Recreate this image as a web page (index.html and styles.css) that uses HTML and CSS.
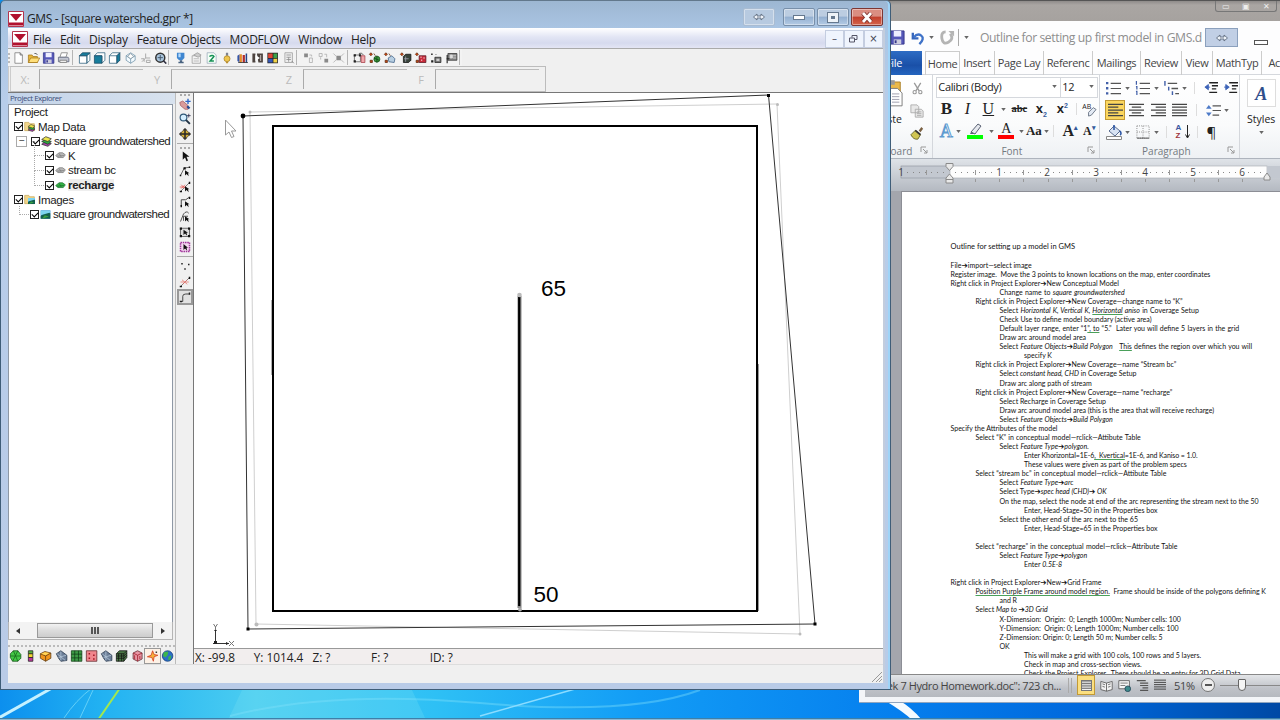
FILE: index.html
```html
<!DOCTYPE html>
<html lang="en">
<head>
  <meta charset="UTF-8">
  <title>GMS - [square watershed.gpr *]</title>
  <link rel="stylesheet" href="styles.css">
</head>
<body>
  <!-- icon sheet -->
  <svg class="sheet">
    <symbol id="logo" viewBox="0 0 16 16"><path d="M.5.5h15v15H.5z" fill="#fff" stroke="#b3344c"/><path d="M2 3h12L8 10z" fill="#b0102e"/><path d="M1 11.5h14v3H1z" fill="#b0102e"/></symbol>
    <symbol id="new" viewBox="0 0 16 16"><path d="M3 1h7l3 3v11H3z" fill="#fff" stroke="#777"/><path d="M10 1v3h3" fill="none" stroke="#555"/></symbol>
    <symbol id="open" viewBox="0 0 16 16"><path d="M1 4h5l1 2h6v8H1z" fill="#e8b73c" stroke="#a4781c"/><path d="M4 8h12l-3 6H1z" fill="#ffdf7a" stroke="#a4781c"/><path d="M9 2q3-1 4 2" fill="none" stroke="#444"/></symbol>
    <symbol id="save" viewBox="0 0 16 16"><path d="M1 1h14v14H1z" fill="#5557b8" stroke="#33358a"/><path d="M4 1h8v6H4z" fill="#eef"/><path d="M4 10h8v5H4z" fill="#ccd"/><path d="M5 11h2v3H5z" fill="#33358a"/></symbol>
    <symbol id="print" viewBox="0 0 16 16"><path d="M5 1h8l-2 6H3z" fill="#fff" stroke="#777"/><path d="M1 7h13l1 2v4H1z" fill="#c2c6d2" stroke="#596078"/><path d="M3 11h9v3H3z" fill="#eee" stroke="#777"/></symbol>
    <symbol id="cubetop" viewBox="0 0 16 16"><path d="M1 5h10v10H1zM11 5l4-4v10l-4 4z" fill="#fff" stroke="#2b5f7c"/><path d="M1 5l4-4h10l-4 4z" fill="#177d9c" stroke="#1c4a64"/></symbol>
    <symbol id="cubefront" viewBox="0 0 16 16"><path d="M1 5l4-4h10v10l-4 4V5z" fill="#fff" stroke="#2b5f7c"/><path d="M1 5h10v10H1z" fill="#177d9c" stroke="#1c4a64"/></symbol>
    <symbol id="cubeside" viewBox="0 0 16 16"><path d="M1 5l4-4h10l-4 4v10H1z" fill="#fff" stroke="#2b5f7c"/><path d="M11 5l4-4v10l-4 4z" fill="#177d9c" stroke="#1c4a64"/><path d="M1 5h10" stroke="#2b5f7c"/></symbol>
    <symbol id="oblique" viewBox="0 0 16 16"><path d="M8 1l6 4v6l-6 4-6-4V5zM2 5l6 4 6-4M8 9v6" fill="#f4fbff" stroke="#6e92a8"/><path d="M8 2l4 4-4 3-4-3z" fill="#fff" stroke="#7a8c98"/></symbol>
    <symbol id="prev" viewBox="0 0 16 16"><path d="M8 2v6h6M8 8l-5 5M2 9h4v4M9 11h5v3H9z" fill="none" stroke="#aaa" stroke-width="1.3"/></symbol>
    <symbol id="frame" viewBox="0 0 16 16"><circle cx="7.500" cy="7.500" r="6" fill="#a9c5dd" stroke="#333" stroke-width="2"/><path d="M4 7.500h7M7.500 4v7" stroke="#456" stroke-width="1.200"/><path d="M11.500 11.500l4 4" stroke="#334" stroke-width="2"/></symbol>
    <symbol id="glass" viewBox="0 0 16 16"><path d="M3 1h10v7l-3 3H6L3 8z" fill="#3f86d0"/><path d="M5 2h3v5H5z" fill="#b5dcff"/><path d="M7 11h3v2h2v2H5v-2h2z" fill="#4a6380"/></symbol>
    <symbol id="props" viewBox="0 0 16 16"><path d="M2 5h11v10H2z" fill="#f4f4f4" stroke="#999"/><path d="M4 4l5-3 5 3-4 3z" fill="#ccc" stroke="#999"/><path d="M4 9h7M4 12h7" stroke="#aaa"/></symbol>
    <symbol id="refresh" viewBox="0 0 16 16"><path d="M2 1h9l3 3v11H2z" fill="#f4fff6" stroke="#9ab"/><path d="M5 6q4-3 6 0l-5 6h5" fill="none" stroke="#169155" stroke-width="2"/></symbol>
    <symbol id="bulb" viewBox="0 0 16 16"><path d="M7 1h3v4H7z" fill="#7c8290"/><circle cx="8.500" cy="9" r="4" fill="#efc64e" stroke="#a98224"/><path d="M7 13h3v2H7z" fill="#bb9033"/></symbol>
    <symbol id="books" viewBox="0 0 16 16"><path d="M1 5l3-2v11l-3-2z" fill="#3456a8"/><path d="M4 3h3v11H4z" fill="#e58c28"/><path d="M8 4h3v10H8z" fill="#b02c2c"/><path d="M12 2h2v12h-2z" fill="#24448c"/><path d="M2 14h13" stroke="#222"/></symbol>
    <symbol id="play" viewBox="0 0 16 16"><path d="M1 2h4v12H1zM7 2h8v12H9z" fill="#4d4440"/><path d="M5 4l6 4-6 4z" fill="#fff"/><path d="M12 4v8" stroke="#e8d9d9"/></symbol>
    <symbol id="colors" viewBox="0 0 16 16"><path d="M1 1h14v14H1z" fill="#222"/><path d="M2 2h6v6H2z" fill="#de4434"/><path d="M9 2h5v6H9z" fill="#3ba048"/><path d="M2 9h6v5H2z" fill="#3558b8"/><path d="M9 9h5v5H9z" fill="#f1d347"/></symbol>
    <symbol id="calc" viewBox="0 0 16 16"><path d="M3 1h10v13H3z" fill="#eee" stroke="#999"/><path d="M5 4h6M5 7h6M5 10h6M8 7v6" stroke="#888"/><path d="M12 12l3 3" stroke="#777"/></symbol>
    <symbol id="dim1" viewBox="0 0 16 16"><path d="M2 2h5v5H2z" fill="#8a8a8a"/><path d="M9 8h4v6H9zM9 4h3v2" fill="none" stroke="#aaa"/></symbol>
    <symbol id="dim2" viewBox="0 0 16 16"><path d="M9 9h5v5H9z" fill="#8a8a8a"/><path d="M2 2h4v4H2zM9 3h3v4M4 7v3" fill="none" stroke="#aaa"/></symbol>
    <symbol id="dim3" viewBox="0 0 16 16"><path d="M5 5h6v6H5z" fill="#8a8a8a"/><path d="M1 2l4 4M15 2l-4 4M1 14l4-4M15 14l-4-4" stroke="#aaa"/></symbol>
    <symbol id="map1" viewBox="0 0 16 16"><path d="M1 4h8v9H1z" fill="none" stroke="#555"/><path d="M0 3h3v3H0zM7 3h3v3H7zM0 11h3v3H0z" fill="#222"/><path d="M10 5h5v9h-5z" fill="#f1a7ab" stroke="#a63d48"/><path d="M7 2q4-2 6 2" fill="none" stroke="#333"/></symbol>
    <symbol id="map2" viewBox="0 0 16 16"><path d="M3 1l2 2-2 2-2-2zM2 11h3v3H2zM7 2l2 3" fill="#c9440e" stroke="#5b2b12"/><circle cx="11" cy="9.500" r="4" fill="#3a9b3c" stroke="#1c521e"/><path d="M7 8l7 3M11 5v9" stroke="#124214"/></symbol>
    <symbol id="map3" viewBox="0 0 16 16"><path d="M3 1l2 2-2 2-2-2zM2 11h3v3H2zM7 2l2 3" fill="#c9440e" stroke="#5b2b12"/><path d="M6 8l5-3 4 4-1 5-7-1z" fill="#b8cfe2" stroke="#3c5f85"/></symbol>
    <symbol id="map4" viewBox="0 0 16 16"><path d="M3 1l2 2-2 2-2-2z" fill="#c9440e" stroke="#5b2b12"/><path d="M5 6l3-3h7v8l-3 3H5z" fill="#38433a" stroke="#111"/><path d="M6 9h6M8 6v7" stroke="#aab"/></symbol>
    <symbol id="map5" viewBox="0 0 16 16"><path d="M3 1l2 2-2 2-2-2zM2 11h3v3H2z" fill="#c9440e" stroke="#5b2b12"/><path d="M6 5h9v9H6z" fill="#c92a3a" stroke="#581620"/><path d="M8 7h1M12 8h1M9 11h1" stroke="#fff" stroke-width="2"/></symbol>
    <symbol id="map6" viewBox="0 0 16 16"><path d="M2 2h2v2H2zM2 11h3v3H2zM7 3h2v1" fill="#222"/><path d="M7 7h8v7H7z" fill="#777" stroke="#222"/><path d="M9 9h4v3H9z" fill="#ccc"/></symbol>
    <symbol id="map7" viewBox="0 0 16 16"><path d="M3 2h12v9H3z" fill="#888" stroke="#333"/><path d="M6 4h3v4H6zM10 5h4M10 8h4" fill="#ddd" stroke="#ddd"/><path d="M2 4v11M1 9h4" stroke="#222" stroke-width="1.500"/></symbol>
    <symbol id="pan" viewBox="0 0 16 16"><path d="M1 6l4-2 7 6v5H8L2 10z" fill="#d99b9b" stroke="#a35c62"/><path d="M12 1v7M8.500 4.500h7" stroke="#2c64c6" stroke-width="1.800"/><path d="M11 11l3 3" stroke="#234a91" stroke-width="3"/></symbol>
    <symbol id="zoomi" viewBox="0 0 16 16"><circle cx="6" cy="6" r="4.500" fill="#d5efff" stroke="#2f5878" stroke-width="1.500"/><path d="M9.500 9.500l5 5" stroke="#234" stroke-width="2.500"/><path d="M13 1v5M10.500 3.500h5" stroke="#224"/></symbol>
    <symbol id="rotate" viewBox="0 0 16 16"><path d="M8 1l7 7-7 7-7-7z" fill="#d5b03a" stroke="#4b3d16"/><path d="M8 2v12M2 8h12" stroke="#272727" stroke-width="2"/><path d="M5 3l3-3 3 3zM5 13l3 3 3-3zM3 5L0 8l3 3zM13 5l3 3-3 3z" fill="#333"/></symbol>
    <symbol id="arrow" viewBox="0 0 16 16"><path d="M5 2v11l3-3 2 5 2-1-2-5h4z" fill="#111"/></symbol>
    <symbol id="selpt" viewBox="0 0 16 16"><path d="M2 14L7 4l7-1" fill="none" stroke="#666" stroke-width="1.300"/><path d="M1 13h2v2H1zM6 3h3v3H6zM13 2h2v2h-2z" fill="#111"/><path d="M8 7v7l2-2 3 3-1-4h2z" fill="#111"/></symbol>
    <symbol id="selvx" viewBox="0 0 16 16"><path d="M2 14L14 2" stroke="#555"/><path d="M3 5l5 5M8 5l-5 5M1 8h8" stroke="#e5504b"/><path d="M1 13h3v2H1zM13 1h2v3h-2zM8 7v7l2-2 3 3-1-4h2z" fill="#111"/></symbol>
    <symbol id="selarc" viewBox="0 0 16 16"><path d="M3 13V5h6l4-3" fill="none" stroke="#444" stroke-width="1.300"/><path d="M2 12h2v3H2zM13 1h2v3h-2zM8 7v7l2-2 3 3-1-4h2z" fill="#111"/></symbol>
    <symbol id="selgrp" viewBox="0 0 16 16"><path d="M2 14L6 4q4-5 7-1M6 13V7h6" fill="none" stroke="#444" stroke-width="1.200"/><path d="M8 7v7l2-2 3 3-1-4h2z" fill="#111"/></symbol>
    <symbol id="selpoly" viewBox="0 0 16 16"><path d="M2 3h12v11H2z" fill="#ddd" stroke="#444"/><path d="M1 2h3v3H1zM12 2h3v3h-3zM1 12h3v3H1zM12 12h3v3h-3zM6 5v7l2-2 3 3-1-4h2z" fill="#111"/></symbol>
    <symbol id="selbox" viewBox="0 0 16 16"><path d="M2 2h12v12H2z" fill="#f4d6f0" stroke="#a0359a" stroke-dasharray="2 1" stroke-width="2"/><path d="M6 4v8l2-2 3 3-1-4h2z" fill="#111"/></symbol>
    <symbol id="mkpt" viewBox="0 0 16 16"><path d="M3 4h2v2H3zM12 5h2v2h-2zM7 11h2v2H7z" fill="#222"/></symbol>
    <symbol id="mkvx" viewBox="0 0 16 16"><path d="M2 14L14 2" stroke="#555"/><path d="M4 5l7 6M2 8h11M5 11l6-6" stroke="#e5736b"/><path d="M1 13h3v2H1zM13 1h2v3h-2z" fill="#111"/></symbol>
    <symbol id="mkarc" viewBox="0 0 16 16"><path d="M3 14h2V7q0-3 4-3h5" fill="none" stroke="#444" stroke-width="1.300"/><path d="M1 13h3v2H1zM13 2h2v3h-2z" fill="#222"/></symbol>
    <symbol id="folder" viewBox="0 0 16 16"><path d="M1 2h6l1 2h7v10H1z" fill="#f2d68a" stroke="#c5a351"/></symbol>
    <symbol id="layers" viewBox="0 0 16 16"><path d="M1 12l6-4 8 3-5 4z" fill="#aa48ae" stroke="#222"/><path d="M1 8l6-3 8 3-5 4z" fill="#2fae43" stroke="#222"/><path d="M1 5l6-4 8 3-5 4z" fill="#ede44c" stroke="#222"/></symbol>
    <symbol id="cov" viewBox="0 0 16 16"><path d="M1 8l5-4h5l4 3-3 4H4z" fill="#b8b8b8" stroke="#707070"/><path d="M3 9l10-1M6 5l3 5" stroke="#777"/></symbol>
    <symbol id="covon" viewBox="0 0 16 16"><path d="M1 8l5-4h5l4 3-3 4H4z" fill="#35b446" stroke="#19692a"/><path d="M3 9l10-1M6 5l3 5" stroke="#19692a"/></symbol>
    <symbol id="pic" viewBox="0 0 16 16"><path d="M1 2h14v12H1z" fill="#2979c8"/><path d="M1 10l6-5 8 1v8H1z" fill="#12604f"/><path d="M1 2h14v3L1 9z" fill="#7dd4f1"/><path d="M3 14l4-5 6 2z" fill="#3aa042"/></symbol>
    <symbol id="tin" viewBox="0 0 16 16"><path d="M5 1h6l4 5v5l-4 4H4l-3-5V5z" fill="#43c746" stroke="#17521a"/><path d="M1 8h14M5 1l6 14M11 1L4 15" stroke="#17661a"/></symbol>
    <symbol id="bore" viewBox="0 0 16 16"><path d="M5 1h6v4H5z" fill="#55b03f" stroke="#222"/><path d="M5 5h6v5H5z" fill="#f2d632" stroke="#222"/><path d="M5 10h6v5H5z" fill="#bd369c" stroke="#222"/></symbol>
    <symbol id="solid" viewBox="0 0 16 16"><path d="M1 5l6-3 8 2v7l-7 4-7-4z" fill="#f0951e" stroke="#5c3a12"/><path d="M1 5l7 3 7-4M8 8v7" fill="none" stroke="#5c3a12"/><path d="M2 5l5-2 6 1-5 3z" fill="#ffd75b"/></symbol>
    <symbol id="mesh" viewBox="0 0 16 16"><path d="M1 5l6-4 8 6v7l-8 1-3-4z" fill="#6d7f98" stroke="#263549"/><path d="M2 5l11 9M7 2v12M4 10l10-3" stroke="#b8cbdc"/></symbol>
    <symbol id="grid2" viewBox="0 0 16 16"><path d="M1 1h14v14H1z" fill="#3d9b46" stroke="#113d17"/><path d="M5.500 1v14M10.500 1v14M1 5.500h14M1 10.500h14" stroke="#113d17"/></symbol>
    <symbol id="scatter" viewBox="0 0 16 16"><path d="M1 1h14v14H1z" fill="#f0858c" stroke="#5d2328"/><path d="M4 4h2v2H4zM10 6h2v2h-2zM4 10h2v2H4zM10 11h2v2h-2z" fill="#9e1422"/></symbol>
    <symbol id="grid3" viewBox="0 0 16 16"><path d="M1 5l4-4h10v9l-4 5H1z" fill="#4a7745" stroke="#111"/><path d="M1 5h10l4-4M11 5v10M4 5v10M8 5v10M1 8h10l4-4M1 11h10l4-4" fill="none" stroke="#111"/></symbol>
    <symbol id="scat3" viewBox="0 0 16 16"><path d="M2 4l6-3 6 3v8l-6 3-6-3z" fill="#e896a4" stroke="#5d2328"/><path d="M2 4l6 3 6-3M8 7v8M4 7v5M11 8v4" fill="none" stroke="#9e1422"/></symbol>
    <symbol id="mapmod" viewBox="0 0 16 16"><path d="M8 1l2 5 5 1-5 2-1 6-2-5-6-1 5-2z" fill="#f5b13a" stroke="#d2341d"/><path d="M12 2h2v2h-2z" fill="#333"/></symbol>
    <symbol id="globe" viewBox="0 0 16 16"><circle cx="8" cy="8" r="7" fill="#2c6fc9" stroke="#123a77"/><path d="M3 3l6-1-1 5-3 3-3-2zM9 9l4-2-1 5-3 2z" fill="#3db64c"/></symbol>
    <!-- word processor icons -->
    <symbol id="undo" viewBox="0 0 16 16"><path d="M3 3v6h6" fill="none" stroke="#3566bd" stroke-width="2.500"/><path d="M4 8q4-5 8-2t-2 9" fill="none" stroke="#3f72c8" stroke-width="2.500"/></symbol>
    <symbol id="redo" viewBox="0 0 16 16"><path d="M11 4q4 6-2 9t-7-4 4-7" fill="none" stroke="#b4b4b4" stroke-width="3"/><path d="M9 1h6v6z" fill="#b4b4b4"/></symbol>
    <symbol id="cut" viewBox="0 0 16 16"><path d="M4 1l6 10M12 1L6 11" stroke="#9a9a9a" stroke-width="1.600"/><circle cx="4.500" cy="12.500" r="2" fill="none" stroke="#9a9a9a" stroke-width="1.400"/><circle cx="11.500" cy="12.500" r="2" fill="none" stroke="#9a9a9a" stroke-width="1.400"/></symbol>
    <symbol id="copy" viewBox="0 0 16 16"><path d="M1 1h7l2 2v7H1zM6 6h7l2 2v7H6z" fill="#e8e8e8" stroke="#aaa"/><path d="M8 9h5M8 11h5M8 13h5" stroke="#aaa"/></symbol>
    <symbol id="brush" viewBox="0 0 16 16"><path d="M10 5l3-4 2 2-3 4z" fill="#7a6042"/><path d="M6 5l6 5-3 5q-5 1-8-5z" fill="#cfc553" stroke="#66652b"/><path d="M6 5l6 5" stroke="#333" stroke-width="2"/></symbol>
    <symbol id="clip" viewBox="0 0 24 30"><path d="M1 3h20v24H1z" fill="#eab94b" stroke="#a77c22"/><path d="M6 1h9v5H6z" fill="#999"/><path d="M9 10h9l5 5v14H9z" fill="#fff" stroke="#777"/><path d="M12 16h8M12 19h8M12 22h8M12 25h8" stroke="#99a"/></symbol>
    <symbol id="eraser" viewBox="0 0 16 16"><path d="M7 11l5-5 3 2-5 6-3 1z" fill="#e4ebf5" stroke="#6b7585"/></symbol>
    <symbol id="pen" viewBox="0 0 16 16"><path d="M4 9l7-8 3 2-6 8z" fill="#e6e9ef" stroke="#596173"/><path d="M4 9l4 2-5 0z" fill="#596173"/><path d="M0 12h16v4H0z" fill="#0f0"/></symbol>
    <symbol id="bul" viewBox="0 0 16 16"><path d="M5 2.500h11M5 8h11M5 13.500h11" stroke="#555" stroke-width="1.200"/><path d="M0 1h2.500v2.500H0zM0 6.500h2.500V9H0zM0 12h2.500v2.500H0z" fill="#415fa8"/></symbol>
    <symbol id="num" viewBox="0 0 16 16"><path d="M5 2.500h11M5 8h11M5 13.500h11" stroke="#555" stroke-width="1.200"/><path d="M1.500 0v4M1 6h1v3M1 11h1v4" fill="none" stroke="#415fa8" stroke-width="1.300"/></symbol>
    <symbol id="multi" viewBox="0 0 16 16"><path d="M4 2.500h10M8 8h7M12 13.500h4" stroke="#555" stroke-width="1.500"/><path d="M1 0v5M5 6v4M9 11v4" stroke="#415fa8" stroke-width="1.500"/></symbol>
    <symbol id="outd" viewBox="0 0 16 16"><path d="M6 2h10M9 5.500h7M9 9h5M6 13h9" stroke="#222" stroke-width="1.700"/><path d="M7 7H3M5 4L1 7l4 3z" fill="#3d63b8" stroke="#3d63b8"/></symbol>
    <symbol id="ind" viewBox="0 0 16 16"><path d="M6 2h10M9 5.500h7M9 9h5M6 13h9" stroke="#222" stroke-width="1.700"/><path d="M0 7h4M2 4l4 3-4 3z" fill="#3d63b8" stroke="#3d63b8"/></symbol>
    <symbol id="al" viewBox="0 0 16 16"><path d="M0 1.500h16M0 4.500h11M0 7.500h16M0 10.500h11M0 13.500h16" stroke="#444" stroke-width="1.300"/></symbol>
    <symbol id="ac" viewBox="0 0 16 16"><path d="M0 1.500h16M3 4.500h10M0 7.500h16M3 10.500h10M0 13.500h16" stroke="#444" stroke-width="1.300"/></symbol>
    <symbol id="ar" viewBox="0 0 16 16"><path d="M0 1.500h16M5 4.500h11M0 7.500h16M5 10.500h11M0 13.500h16" stroke="#444" stroke-width="1.300"/></symbol>
    <symbol id="aj" viewBox="0 0 16 16"><path d="M0 1.500h16M0 4.500h16M0 7.500h16M0 10.500h16M0 13.500h16" stroke="#444" stroke-width="1.300"/></symbol>
    <symbol id="lsp" viewBox="0 0 16 16"><path d="M7 3h9M7 8h9M7 13h7" stroke="#555" stroke-width="1.300"/><path d="M0 6l3-4 3 4zM0 10l3 4 3-4z" fill="#4c7ac8"/></symbol>
    <symbol id="bucket" viewBox="0 0 16 16"><path d="M3 7l5-5 6 5-5 5z" fill="#d8e3f3" stroke="#5a6d90"/><path d="M8 1v5M14 7q2 3 0 4" fill="none" stroke="#2e57a5" stroke-width="1.600"/><path d="M.5 12.500h15v3H.5z" fill="#fff" stroke="#888"/></symbol>
    <symbol id="bord" viewBox="0 0 16 16"><path d="M1 1h14v14H1zM8 1v14M1 8h14" fill="none" stroke="#777" stroke-dasharray="1 1.500"/><path d="M1 15h14" stroke="#444"/></symbol>
    <symbol id="sort" viewBox="0 0 5 14"><path d="M2.500 0v12M.5 9.500l2 3.500 2-3.500" fill="none" stroke="#222"/></symbol>
    <symbol id="launch" viewBox="0 0 8 8"><path d="M1 6V1h5M3 3l4 4M7 4v3H4" fill="none" stroke="#999"/></symbol>
    <symbol id="dd" viewBox="0 0 6 4"><path d="M0 0h6L3 4z" fill="#666"/></symbol>
    <symbol id="read" viewBox="0 0 16 16"><path d="M1 3l7 2 7-2v10l-7 2-7-2zM8 5v10M3 6l3 1M3 9l3 1M10 7l3-1M10 10l3-1" fill="#f3f3f3" stroke="#555"/></symbol>
    <symbol id="web" viewBox="0 0 16 16"><path d="M1 2h13v10H1z" fill="#f6f6f6" stroke="#555"/><path d="M3 5h9M3 8h6" stroke="#666"/><circle cx="12" cy="12" r="3.500" fill="#3d8a8c" stroke="#245"/></symbol>
    <symbol id="outl" viewBox="0 0 16 16"><path d="M1 2h11M5 5h10M5 8h10M8 11h7M5 14h10" stroke="#555" stroke-width="1.500"/></symbol>
    <symbol id="ptr" viewBox="0 0 16 16"><path d="M2.500 6l3.500-3v2h4V3l3.500 3-3.500 3V7H6v2z" fill="#eef3f9" stroke="#5d6b7d" stroke-width=".9"/></symbol>
  </svg>

  <svg class="wallpaper" width="1280" height="40" viewBox="0 680 1280 40">
    <defs>
      <linearGradient id="sky"><stop offset="0" stop-color="#0c8fee"/><stop offset=".08" stop-color="#22b2f2"/><stop offset=".2" stop-color="#4bcdf1"/><stop offset=".34" stop-color="#2ec0f5"/><stop offset=".5" stop-color="#129cf6"/><stop offset=".7" stop-color="#057fee"/><stop offset=".85" stop-color="#0068dc"/><stop offset="1" stop-color="#0049a5"/></linearGradient>
    </defs>
    <rect y="680" width="1280" height="40" fill="url(#sky)"/>
    <path d="M242 690h170l14 30H228z" fill="#8ee9f5" opacity=".2"/>
    <path d="M-5 720L52 688" stroke="#c5f1ff" stroke-width="3"/>
    <path d="M64 718Q76 700 92 688M80 718L94 688" fill="none" stroke="#64d0f8"/>
    <path d="M98 720L120 688" stroke="#a4e84c" stroke-width="2"/>
    <path d="M230 716Q330 690 480 703T700 690" fill="none" stroke="#83e0fb" stroke-width="2" opacity=".4"/>
    <path d="M480 716L575 689" stroke="#8bdcff" stroke-width="1.500"/>
    <path d="M884 700q20 12 28 20h10q-12-14-24-20z" fill="#f4fbff"/>
    <path d="M0 718.500h1280" stroke="#3e7fa8"/>
    <path d="M0 719.500h1280" stroke="#8cb9d6"/>
  </svg>

  <div class="word">
    <div class="backbar">
      <div class="backbtns"><i>▭</i><i>▣</i><i>✕</i></div>
    </div>
    <div class="wtitle">
      <svg class="i15"><use href="#save"/></svg>
      <svg class="i15"><use href="#undo"/></svg>
      <svg class="dd"><use href="#dd"/></svg>
      <svg class="i15"><use href="#redo"/></svg>
      <span class="qsep"></span>
      <svg class="dd"><use href="#dd"/></svg>
      <span class="wname">Outline for setting up first model in GMS.d</span>
      <span class="wsize"><svg class="i16"><use href="#ptr"/></svg></span>
      <span class="wmin"></span>
    </div>
    <div class="tabs">
      <b class="file">File</b><b class="on">Home</b><b>Insert</b><b>Page Lay</b><b>Referenc</b><b>Mailings</b><b>Review</b><b>View</b><b>MathTyp</b><b class="last">Ac</b>
    </div>
    <div class="ribbon">
      <div class="group clipboard">
        <div class="cliprow">
          <div class="paste"><svg width="22" height="30"><use href="#clip"/></svg><span>Paste</span></div>
          <div class="clipcol">
            <svg class="i13"><use href="#cut"/></svg>
            <svg class="i14"><use href="#copy"/></svg>
            <svg class="i14"><use href="#brush"/></svg>
          </div>
        </div>
        <div class="gname"><span>Clipboard</span><svg class="launch"><use href="#launch"/></svg></div>
      </div>
      <div class="group font">
        <div class="combos">
          <div class="combo face">Calibri (Body)<svg class="dd"><use href="#dd"/></svg></div>
          <div class="combo size">12<svg class="dd"><use href="#dd"/></svg></div>
        </div>
        <div class="frow f2">
          <span class="ser bd">B</span><span class="ser it">I</span><span class="ser un">U</span><svg class="dd"><use href="#dd"/></svg>
          <span class="ser st">abc</span><span class="xx">x<sub>2</sub></span><span class="xx">x<sup>2</sup></span><i class="vs"></i>
          <span class="clear">AB<svg class="i15"><use href="#eraser"/></svg></span>
        </div>
        <div class="frow f3">
          <span class="ser glow">A</span><svg class="dd"><use href="#dd"/></svg><svg class="i16"><use href="#pen"/></svg><svg class="dd"><use href="#dd"/></svg>
          <span class="ser redu">A</span><svg class="dd"><use href="#dd"/></svg><span class="ser aa">Aa</span><svg class="dd"><use href="#dd"/></svg><i class="vs"></i>
          <span class="ser grow">A<sup>▴</sup></span><span class="ser shrink">A<sup>▾</sup></span>
        </div>
        <div class="gname"><span>Font</span><svg class="launch"><use href="#launch"/></svg></div>
      </div>
      <div class="group para">
        <div class="frow p1">
          <svg class="i15"><use href="#bul"/></svg><svg class="dd"><use href="#dd"/></svg><svg class="i15"><use href="#num"/></svg><svg class="dd"><use href="#dd"/></svg><svg class="i15"><use href="#multi"/></svg><svg class="dd"><use href="#dd"/></svg><i class="vs"></i><svg class="i14"><use href="#outd"/></svg><svg class="i14"><use href="#ind"/></svg>
        </div>
        <div class="frow p2">
          <span class="pressed"><svg class="i15"><use href="#al"/></svg></span><svg class="i15"><use href="#ac"/></svg><svg class="i15"><use href="#ar"/></svg><svg class="i15"><use href="#aj"/></svg><i class="vs"></i><svg class="i15"><use href="#lsp"/></svg><svg class="dd"><use href="#dd"/></svg>
        </div>
        <div class="frow p3">
          <svg class="i16"><use href="#bucket"/></svg><svg class="dd"><use href="#dd"/></svg><svg class="i14"><use href="#bord"/></svg><svg class="dd"><use href="#dd"/></svg><i class="vs"></i><span class="az"><em>A</em><em>Z</em></span><svg width="5" height="14"><use href="#sort"/></svg><i class="vs"></i><span class="pil">¶</span>
        </div>
        <div class="gname"><span>Paragraph</span><svg class="launch"><use href="#launch"/></svg></div>
      </div>
      <div class="group styles">
        <div class="sbox">A</div>
        <span>Styles</span>
        <svg class="dd"><use href="#dd"/></svg>
      </div>
    </div>
    <svg class="ruler" width="421" height="32" viewBox="859 159 421 32">
      <rect x="901" y="166" width="50" height="12" fill="#c3c8d0" stroke="#8b9099" stroke-width=".6"/>
      <rect x="950" y="166" width="317" height="12" fill="#fdfdfd" stroke="#a5a9b0" stroke-width=".6"/>
      <rect x="1267" y="166" width="20" height="12" fill="#c3c8d0"/>
      <path d="M907 172.500h40M955 172.500h38M1004 172.500h38M1053 172.500h38M1102 172.500h37M1150 172.500h38M1199 172.500h37M1248 172.500h18" stroke="#888" stroke-dasharray="1 5"/>
      <path d="M926.500 170v5M975.500 170v5M1023.500 170v5M1072.500 170v5M1121.500 170v5M1169.500 170v5M1218.500 170v5" stroke="#999"/>
      <path d="M975.500 179v3M999.500 179v3M1023.500 179v3M1048.500 179v3M1072.500 179v3M1096.500 179v3M1121.500 179v3M1145.500 179v3M1169.500 179v3M1194.500 179v3M1218.500 179v3M1242.500 179v3" stroke="#999"/>
      <path d="M946 163.500h7v3l-3.500 4-3.500-4zM946 178l3.500-4 3.500 4v5h-7zM946 179.500h7M1264 177l3-4 3 4v3h-6z" fill="#e9e9e9" stroke="#8a8a8a"/>
      <g class="rn"><text x="901" y="176">1</text><text x="999" y="176">1</text><text x="1047" y="176">2</text><text x="1096" y="176">3</text><text x="1145" y="176">4</text><text x="1193" y="176">5</text><text x="1242" y="176">6</text></g>
    </svg>
    <div class="docarea">
      <div class="page">
        <p class="head">Outline for setting up a model in GMS</p>
        <p>File<s>➔</s>import—select image</p>
        <p>Register image.&nbsp; Move the 3 points to known locations on the map, enter coordinates</p>
        <p>Right click in Project Explorer<s>➔</s>New Conceptual Model</p>
        <p class="l2 wide">Change name to <em>square groundwatershed</em></p>
        <p class="l1">Right click in Project Explorer<s>➔</s>New Coverage—change name to “K”</p>
        <p class="l2 wide">Select <em>Horizontal K, Vertical K, <u>Horizontal</u> aniso</em> in Coverage Setup</p>
        <p class="l2">Check Use to define model boundary (active area)</p>
        <p class="l2 wide">Default layer range, enter “1<u>”, to</u> “5.”&nbsp; Later you will define 5 layers in the grid</p>
        <p class="l2">Draw arc around model area</p>
        <p class="l2 wide">Select <em>Feature Objects<s>➔</s>Build Polygon</em> &nbsp; <u>This</u> defines the region over which you will</p>
        <p class="l3">specify K</p>
        <p class="l1">Right click in Project Explorer<s>➔</s>New Coverage—name “Stream bc”</p>
        <p class="l2">Select <em>constant head, CHD</em> in Coverage Setup</p>
        <p class="l2">Draw arc along path of stream</p>
        <p class="l1">Right click in Project Explorer<s>➔</s>New Coverage—name “recharge”</p>
        <p class="l2">Select Recharge in Coverage Setup</p>
        <p class="l2">Draw arc around model area (this is the area that will receive recharge)</p>
        <p class="l2 wide">Select <em>Feature Objects<s>➔</s>Build Polygon</em></p>
        <p>Specify the Attributes of the model</p>
        <p class="l1 wide">Select “K” in conceptual model—rclick—Attibute Table</p>
        <p class="l2 wide">Select <em>Feature Type<s>➔</s>polygon.</em></p>
        <p class="l3 tight">Enter Khorizontal=1E-6<u>,&nbsp; Kvertical</u>=1E-6, and Kaniso = 1.0.</p>
        <p class="l3">These values were given as part of the problem specs</p>
        <p class="l1 wide">Select “stream bc” in conceptual model—rclick—Attibute Table</p>
        <p class="l2 wide">Select <em>Feature Type<s>➔</s>arc</em></p>
        <p class="l2">Select Type<s>➔</s><em>spec head (CHD)<s>➔</s> OK</em></p>
        <p class="l2">On the map, select the node at end of the arc representing the stream next to the 50</p>
        <p class="l3">Enter, Head-Stage=50 in the Properties box</p>
        <p class="l2">Select the other end of the arc next to the 65</p>
        <p class="l3">Enter, Head-Stage=65 in the Properties box</p>
        <p>&nbsp;</p>
        <p class="l1 wide">Select “recharge” in the conceptual model—rclick—Attribute Table</p>
        <p class="l2 wide">Select <em>Feature Type<s>➔</s>polygon</em></p>
        <p class="l3">Enter <em>0.5E-8</em></p>
        <p>&nbsp;</p>
        <p>Right click in Project Explorer<s>➔</s>New<s>➔</s>Grid Frame</p>
        <p class="l1"><u>Position Purple Frame around model region.</u>&nbsp; Frame should be inside of the polygons defining K</p>
        <p class="l2">and R</p>
        <p class="l1">Select <em>Map to <s>➔</s>3D Grid</em></p>
        <p class="l2">X-Dimension:&nbsp; Origin:&nbsp; 0; Length 1000m; Number cells: 100</p>
        <p class="l2">Y-Dimension:&nbsp; Origin: 0; Length 1000m; Number cells: 100</p>
        <p class="l2">Z-Dimension: Origin: 0; Length 50 m; Number cells: 5</p>
        <p class="l2">OK</p>
        <p class="l3">This will make a grid with 100 cols, 100 rows and 5 layers.</p>
        <p class="l3">Check in map and cross-section views.</p>
        <p class="l3">Check the Project Explorer.&nbsp; There should be an entry for 3D Grid Data</p>
      </div>
    </div>
    <div class="wstatus">
      <span class="msg">Week 7 Hydro Homework.doc": 723 ch...</span>
      <span class="grip2"></span>
      <span class="vbtn"><svg class="i14"><use href="#aj"/></svg></span>
      <svg class="i13"><use href="#read"/></svg>
      <svg class="i13"><use href="#web"/></svg>
      <svg class="i13"><use href="#outl"/></svg>
      <svg class="i12"><use href="#aj"/></svg>
      <span class="pct">51%</span>
      <span class="minus"></span>
      <span class="track"><span class="thumb"></span></span>
    </div>
  </div>

  <div class="gms">
    <div class="title">
      <svg class="i16"><use href="#logo"/></svg>
      <span>GMS - [square watershed.gpr *]</span>
      <div class="cap">
        <b class="rs"><svg class="i16"><use href="#ptr"/></svg></b>
        <b class="mn"><i></i></b>
        <b class="mx"><i></i></b>
        <b class="cl"><svg width="12" height="11" viewBox="0 0 12 11"><path d="M2 1l8 9M10 1L2 10" stroke="#7c2f2a" stroke-width="4.500"/><path d="M2 1l8 9M10 1L2 10" stroke="#fff" stroke-width="2.800"/></svg></b>
      </div>
    </div>
    <div class="inner">
      <div class="menu">
        <svg class="i16"><use href="#logo"/></svg>
        <span>File</span><span>Edit</span><span>Display</span><span>Feature Objects</span><span>MODFLOW</span><span>Window</span><span>Help</span>
        <div class="mdi"><b>–</b><b class="rest"><svg width="9" height="8" viewBox="0 0 9 8"><path d="M3 2.500V.5h5v4H6M.5 3h5v4h-5z" fill="none" stroke="#556"/></svg></b><b>×</b></div>
      </div>
      <div class="tools">
        <i class="grip"></i>
        <svg><use href="#new"/></svg><svg><use href="#open"/></svg><svg><use href="#save"/></svg><svg><use href="#print"/></svg>
        <i class="sep"></i>
        <svg><use href="#cubetop"/></svg><svg><use href="#cubefront"/></svg><svg><use href="#cubeside"/></svg><svg><use href="#oblique"/></svg><svg><use href="#prev"/></svg><svg><use href="#frame"/></svg>
        <i class="sep"></i>
        <svg><use href="#glass"/></svg><svg><use href="#props"/></svg><svg><use href="#refresh"/></svg><svg><use href="#bulb"/></svg><svg><use href="#books"/></svg><svg><use href="#play"/></svg><svg><use href="#colors"/></svg><svg><use href="#calc"/></svg>
        <i class="sep"></i>
        <svg><use href="#dim1"/></svg><svg><use href="#dim2"/></svg><svg><use href="#dim3"/></svg>
        <i class="sep"></i>
        <svg><use href="#map1"/></svg><svg><use href="#map2"/></svg><svg><use href="#map3"/></svg><svg><use href="#map4"/></svg><svg><use href="#map5"/></svg><svg><use href="#map6"/></svg><svg><use href="#map7"/></svg>
        <i class="sep"></i>
      </div>
      <div class="coords">
        <label>X:</label><i></i><label>Y</label><i></i><label>Z</label><i></i><label>F</label><i></i>
      </div>
      <div class="main">
        <div class="side">
          <div class="pe">Project Explorer</div>
          <div class="tree">
            <div class="row">Project</div>
            <div class="row t0"><i class="ck"></i><svg><use href="#folder"/></svg><svg class="over"><use href="#layers"/></svg>Map Data</div>
            <div class="row t1 ex"><i class="ck"></i><svg><use href="#layers"/></svg>square groundwatershed</div>
            <div class="row t2"><i class="ck"></i><svg><use href="#cov"/></svg>K</div>
            <div class="row t2"><i class="ck"></i><svg><use href="#cov"/></svg>stream bc</div>
            <div class="row t2"><i class="ck"></i><svg><use href="#covon"/></svg><b>recharge</b></div>
            <div class="row t0"><i class="ck"></i><svg><use href="#folder"/></svg><svg class="over"><use href="#pic"/></svg>Images</div>
            <div class="row t1"><i class="ck"></i><svg><use href="#pic"/></svg>square groundwatershed</div>
          </div>
          <div class="hscroll"><i class="lt"></i><span class="hthumb"><i></i><i></i><i></i></span><i class="rt"></i></div>
          <div class="modules">
            <svg><use href="#tin"/></svg><svg><use href="#bore"/></svg><svg><use href="#solid"/></svg><svg><use href="#mesh"/></svg><svg><use href="#grid2"/></svg><svg><use href="#scatter"/></svg><svg><use href="#mesh"/></svg><svg><use href="#grid3"/></svg><svg><use href="#scat3"/></svg><svg class="down"><use href="#mapmod"/></svg><svg><use href="#globe"/></svg>
          </div>
        </div>
        <div class="vtools">
          <i class="vgrip"></i>
          <svg><use href="#pan"/></svg><svg><use href="#zoomi"/></svg><svg><use href="#rotate"/></svg>
          <i class="hs"></i><i class="vgrip"></i>
          <svg><use href="#arrow"/></svg><svg><use href="#selpt"/></svg><svg><use href="#selvx"/></svg><svg><use href="#selarc"/></svg><svg><use href="#selgrp"/></svg><svg><use href="#selpoly"/></svg><svg><use href="#selbox"/></svg>
          <i class="hs"></i>
          <svg><use href="#mkpt"/></svg><svg><use href="#mkvx"/></svg><svg class="down"><use href="#mkarc"/></svg>
        </div>
        <div class="view">
          <svg class="canvas" width="689" height="555" viewBox="194 93 689 555">
            <path d="M250 112L777 104L800 634L256 624z" fill="none" stroke="#cfcfcf"/>
            <path d="M243 116L768.500 95L815 624L248 629z" fill="none" stroke="#333"/>
            <path d="M273 126H757V611H273z" fill="none" stroke="#000" stroke-width="2"/>
            <path d="M272.700 300v75M757.400 364v247" stroke="#000" stroke-width="2"/>
            <path d="M519.500 296v312" stroke="#888" stroke-width="4"/>
            <path d="M519.200 297v309" stroke="#000" stroke-width="2.200"/>
            <circle cx="519.500" cy="295" r="2.300" fill="#bbb"/><circle cx="520" cy="609.500" r="2" fill="#aaa"/>
            <circle cx="243" cy="116" r="2.400"/><path d="M767 94h3v3h-3zM813.500 622.500h3v3h-3zM246.500 627.500h3v3h-3z"/>
            <g fill="#bbb"><circle cx="250" cy="112" r="1.500"/><circle cx="777.500" cy="104.500" r="1.500"/><circle cx="256.500" cy="624.500" r="2"/><circle cx="800" cy="634" r="1.500"/></g>
            <g class="big"><text x="541" y="295.500">65</text><text x="533.500" y="601.500">50</text></g>
            <path d="M215.500 631v12M213 643.500h16" stroke="#333" fill="none"/>
            <path d="M214 641h3v3h-3zM214 631h3l-1.500-2zM226 642v3l3-1.500zM213 640h4" fill="#222"/>
            <path d="M213.500 624l2 3 2-3M215.500 627v3M229 641l5 5M234 641l-5 5" stroke="#777" fill="none"/>
            <path d="M225.500 120v15l3.500-3 2.500 5.500 2.500-1-2.500-5.500h4.500z" fill="#fff" stroke="#999"/>
          </svg>
          <div class="status"><span>X: -99.8</span><span>Y: 1014.4</span><span>Z: ?</span><span>F: ?</span><span>ID: ?</span></div>
        </div>
      </div>
      <div class="foot"><svg width="12" height="12" viewBox="0 0 12 12"><path d="M1 11L11 1M5 11l6-6M8 11l3-3" stroke="#999"/></svg></div>
    </div>
  </div>
</body>
</html>
```
FILE: styles.css
```css
*{
  box-sizing: border-box;
}
body{
  margin: 0;
  width: 1280px;
  height: 720px;
  overflow: hidden;
  position: relative;
  background: #0c8fee;
  font-family: "Open Sans", "Noto Sans", sans-serif;
  color: #222;
}
svg{
  display: block;
  flex: none;
}
.sheet{
  position: absolute;
  width: 0;
  height: 0;
}
.wallpaper{
  position: absolute;
  left: 0;
  top: 680px;
}
.i12{ width: 12px; height: 12px; }
.i13{ width: 13px; height: 13px; }
.i14{ width: 14px; height: 14px; }
.i15{ width: 15px; height: 15px; }
.i16{ width: 16px; height: 16px; }
.dd{ width: 5px; height: 3px; }

/* GMS window */
.gms{
  position: absolute;
  left: 0;
  top: 0;
  width: 891px;
  height: 690px;
  padding: 0 7px 6px;
  border: 1px solid #3f5d78;
  border-top-color: #62788c;
  border-radius: 5px 5px 0 0;
  background: linear-gradient(#9db7d2, #aac5e3 28px, #b7cdea 100px, #b9cbe7);
  box-shadow: inset -2px 0 #9fd4f8;
  display: flex;
  flex-direction: column;
}
.title{
  height: 27px;
  flex: none;
  display: flex;
  align-items: center;
  font-size: 12px;
  letter-spacing: -.36px;
  padding-top: 8px;
}
.title span{
  margin-left: 3px;
}
.cap{
  margin-left: auto;
  display: flex;
  gap: 2px;
  margin-top: -3px;
}
.cap b{
  width: 32px;
  height: 18px;
  border: 1px solid #788fa9;
  border-radius: 2px;
  background: linear-gradient(#bccde1 45%, #93afd0 50%, #b4cbe5);
  display: flex;
  align-items: center;
  justify-content: center;
  box-shadow: inset 0 0 0 1px rgba(255,255,255,.4);
}
.cap .rs{
  background: #b7cae0;
  border-color: #a9bcd2;
  margin-right: 6px;
}
.cap .rs svg{
  margin-top: 4px;
}
.cap .mn i{
  width: 12px;
  height: 5px;
  background: #fff;
  border: 1px solid #65788e;
}
.cap .mx i{
  width: 10px;
  height: 9px;
  border: 3px solid #eef3f8;
  outline: 1px solid #65788e;
  background: #65788e;
}
.cap .cl{
  border-color: #7e3733;
  background: linear-gradient(#da8d81 45%, #c23e2c 50%, #d4644b);
}
.inner{
  flex: 1;
  display: flex;
  flex-direction: column;
  background: #f0f0f0;
  margin-right: -2px;
  border-right: 2px solid #c3cddd;
  min-height: 0;
}
.menu{
  height: 21px;
  flex: none;
  display: flex;
  align-items: center;
  padding: 2px 0 0 4px;
  font-size: 12px;
  letter-spacing: -.28px;
  background: linear-gradient(#fff, #e2e5f4 45%, #d6daee 75%, #e3e5f4);
  border-bottom: 1px solid #aaa;
}
.menu span{
  margin-right: 9px;
}
.menu .i16{
  margin-right: 5px;
}
.mdi{
  margin-left: auto;
  display: flex;
}
.mdi b{
  width: 19.500px;
  height: 18px;
  border: 1px solid #c4cde0;
  background: #eff4fd;
  font: 10px/16px "DejaVu Sans", sans-serif;
  text-align: center;
  color: #445;
}
.mdi .rest{
  display: flex;
  align-items: center;
  justify-content: center;
}
.tools{
  height: 17px;
  flex: none;
  display: flex;
  align-items: center;
  width: 454px;
  background: #f3f3f3;
}
.tools svg, .modules svg{
  width: 15.300px;
  height: 12px;
}
.grip{
  width: 2.500px;
  height: 10px;
  flex: none;
  border-left: 2px dotted #bbb;
}
.sep{
  width: 5px;
  height: 15px;
  flex: none;
  border-left: 1px solid #b5b5b5;
}
.coords{
  height: 26px;
  flex: none;
  display: flex;
  align-items: center;
  width: 538px;
  border: 1px solid #bcbcbc;
  border-left: 3px double #ccc;
  color: #bbb;
  font-size: 11px;
}
.coords label{
  width: 28px;
  text-align: center;
}
.coords i{
  width: 104px;
  height: 20px;
  border-left: 1px solid #aaa;
  border-top: 1px solid #bbb;
}
.main{
  flex: 1;
  min-height: 0;
  display: flex;
  border-top: 1px solid #777;
}
.side{
  width: 168px;
  display: flex;
  flex-direction: column;
  border-right: 1px solid #bbb;
}
.pe{
  height: 11px;
  font-size: 8px;
  line-height: 9px;
  padding-left: 2px;
  letter-spacing: -.5px;
  background: linear-gradient(90deg, #c2d3e9, #d8e2ee);
  color: #3d4e78;
}
.tree{
  height: 518px;
  background: #fff;
  border: 1px solid #8e98a5;
  border-bottom: 0;
  margin-right: 2px;
  padding: 0 0 0 5px;
  font-family: "Liberation Sans", sans-serif;
  overflow: hidden;
}
.row{
  height: 14.550px;
  display: flex;
  align-items: center;
  font-size: 11.500px;
  letter-spacing: -.3px;
  white-space: nowrap;
}
.row svg{
  width: 11px;
  height: 11px;
  margin: 0 2px 0 1px;
}
.row .over{
  width: 9px;
  height: 8px;
  margin: 3px 2px 0 -10px;
}
.row b{
  background: #eee;
}
.t1{
  padding-left: 15px;
  letter-spacing: -.5px;
}
.t2{ padding-left: 30px; }
.t1::before, .t2::before{
  content: "";
  flex: none;
  width: 9px;
  height: 8px;
  margin: -7px 1px 0 -10px;
  border-left: 1px dotted #aaa;
  border-bottom: 1px dotted #aaa;
}
.t2::before{
  height: 14px;
  margin-top: -14px;
}
.ex::before{
  content: "–";
  height: 9px;
  margin: 0 4px 0 -13px;
  border: 1px solid #aaa;
  font-size: 9px;
  line-height: 6px;
  text-align: center;
}
.ck{
  width: 9px;
  height: 9px;
  flex: none;
  border: 1px solid #222;
  display: flex;
  justify-content: center;
}
.ck::after{
  content: "";
  width: 5px;
  height: 3px;
  margin-top: 1px;
  border-left: 1.500px solid #000;
  border-bottom: 1.500px solid #000;
  transform: rotate(-45deg);
}
.hscroll{
  height: 18px;
  margin-right: 2px;
  border: 1px solid #b5b5b5;
  border-top: 0;
  background: #f3f3f3;
  display: flex;
  align-items: center;
  justify-content: space-between;
  padding: 0 7px;
}
.hthumb{
  width: 116px;
  height: 15px;
  margin-left: 9px;
  border: 1px solid #999;
  background: linear-gradient(#f2f2f2, #dcdcdc 50%, #cdcdcd);
  display: flex;
  gap: 1px;
  align-items: center;
  justify-content: center;
}
.hthumb i{
  width: 2px;
  height: 7px;
  background: #555;
}
.lt, .rt{
  border: 3px solid transparent;
  border-right: 4px solid #333;
  border-left: 0;
}
.rt{
  border-left: 4px solid #333;
  border-right: 0;
}
.modules{
  flex: 1;
  margin-top: 5px;
  border-top: 2px dotted #bbb;
  display: flex;
  align-items: center;
}
.modules svg{
  width: 15.200px;
}
.modules .down{
  height: 14px;
  padding: 1px 0;
  background: #fdf1e6;
  outline: 1px solid #999;
}
.vtools{
  width: 18px;
  display: flex;
  flex-direction: column;
  align-items: center;
  border-right: 1px solid #777;
}
.vtools svg{
  width: 12px;
  height: 12px;
  margin: 1.600px 0;
}
.vtools .down{
  background: #e2e2e2;
  outline: 2px solid #999;
}
.vgrip{
  width: 10px;
  height: 2px;
  margin: 1px 0 0;
  border-top: 2px dotted #aaa;
}
.hs{
  width: 16px;
  height: 1px;
  margin: 1px 0 2px;
  background: #aaa;
}
.view{
  flex: 1;
  background: #fff;
  display: flex;
  flex-direction: column;
}
.status{
  flex: 1;
  border-top: 1px solid #999;
  background: #f2eeee;
  display: flex;
  align-items: center;
  font-size: 11.800px;
  padding-left: 1px;
}
.status span{
  width: 58.700px;
  white-space: nowrap;
}
.big{
  font: 22.500px "Liberation Sans", sans-serif;
}
.foot{
  height: 19px;
  flex: none;
  border-top: 1px solid #ddd;
  display: flex;
  justify-content: flex-end;
  align-items: flex-end;
}

/* Word window */
.word{
  position: absolute;
  left: 859px;
  top: 0;
  width: 421px;
  height: 703px;
  overflow: hidden;
  background: #f3f5f8;
  border-bottom: 1px solid #8fa5bf;
  display: flex;
  flex-direction: column;
}
.backbar{
  height: 21px;
  flex: none;
  background: linear-gradient(#8f8c8a, #aaa6a3 4px, #a6a29f);
  border-top: 1px solid #555;
  padding-left: 356px;
}
.backbtns{
  width: 62px;
  height: 11px;
  border: 1px solid #777;
  border-top: 0;
  border-radius: 0 0 3px 3px;
  display: flex;
  justify-content: space-around;
  font-size: 8px;
  line-height: 10px;
  color: #eee;
}
.backbtns i{
  font-style: normal;
}
.wtitle{
  height: 30px;
  flex: none;
  display: flex;
  align-items: center;
  padding: 3px 0 0 31px;
  background: #fdfdfe;
}
.wtitle .i15:nth-child(2){ margin-left: 5px; }
.wtitle .dd:nth-child(3){ margin-left: 4px; }
.wtitle .i15:nth-child(4){ margin-left: 6px; }
.qsep{
  width: 1px;
  height: 17px;
  margin: 0 5px 0 3px;
  background: #aaa;
}
.wname{
  width: 225px;
  flex: none;
  margin-left: 11px;
  font-size: 12.200px;
  letter-spacing: -.42px;
  line-height: 15px;
  white-space: nowrap;
  color: #8e8e8e;
}
.wsize{
  width: 33px;
  height: 19px;
  border: 1px solid #8ba0bd;
  background: #c1cfe5;
  display: flex;
  justify-content: center;
  padding-top: 3px;
  flex: none;
}
.wmin{
  width: 14px;
  height: 5px;
  margin: 9px 0 0 16px;
  border: 1px solid #555;
  flex: none;
}
.tabs{
  height: 24px;
  flex: none;
  display: grid;
  grid-template-columns: 63px 38px 35px 49px 49px 48px 41px 31px 49px 18px;
  background: #fdfdfe;
  border-bottom: 1px solid #d5d8dd;
}
.tabs b{
  font-weight: normal;
  font-size: 11px;
  letter-spacing: -.35px;
  line-height: 24px;
  text-align: center;
  white-space: nowrap;
  color: #444;
  border-right: 1px solid #ccc;
  height: 24px;
}
.tabs .file{
  color: #fff;
  text-align: right;
  padding-right: 20px;
  background: linear-gradient(#2d6cc4, #1a50a8 60%, #2464be);
  border-right: 0;
}
.tabs .on{
  margin-left: 3px;
  border: 1px solid #ccc;
  border-bottom: 0;
}
.tabs .last{
  text-align: right;
  border-right: 0;
}
.ribbon{
  height: 84px;
  flex: none;
  display: flex;
  background: linear-gradient(#fff, #fafbfc 60%, #eef1f4);
  border-bottom: 1px solid #aeb4bd;
}
.group{
  border-right: 1px solid #d4d7dc;
  display: flex;
  flex-direction: column;
  padding-top: 2px;
}
.gname{
  margin-top: auto;
  height: 13px;
  line-height: 12px;
  font-size: 10px;
  color: #737980;
  display: flex;
  align-items: flex-start;
}
.gname span{
  flex: 1;
  text-align: center;
}
.launch{
  width: 8px;
  height: 8px;
  margin: 1px 4px 0 0;
}
.clipboard{
  width: 75px;
}
.clipboard .gname span{
  text-align: right;
  margin-right: 8px;
}
.cliprow{
  display: flex;
  height: 66px;
}
.paste{
  width: 44px;
  display: flex;
  flex-direction: column;
  align-items: flex-end;
  padding: 1px 0 0;
  font-size: 10.500px;
}
.paste span{
  margin: 4px 1px 0 0;
}
.clipcol{
  width: 28px;
  display: flex;
  flex-direction: column;
  align-items: center;
  justify-content: space-between;
  padding: 5px 0 3px;
}
.font{
  width: 167px;
  padding-left: 3px;
}
.combos{
  display: flex;
  height: 21px;
  width: 162px;
  border: 1px solid #d5d8dd;
  background: #fff;
}
.combo{
  display: flex;
  align-items: center;
  justify-content: space-between;
  font-size: 11px;
  padding: 0 3px 2px 1px;
  letter-spacing: -.35px;
}
.face{
  width: 124px;
  border-right: 1px solid #d5d8dd;
}
.size{
  flex: 1;
}
.frow{
  display: grid;
  height: 22px;
  align-items: center;
  justify-items: center;
}
.f2{ grid-template-columns: 20px 22px 20px 10px 22px 22px 20px 9px 18px; }
.f3{ grid-template-columns: 20px 4px 30px 2px 28px 2px 23px 3px 10px 24px 14px; }
.p1{ grid-template-columns: 16px 12px 18px 11px 19px 6px 14px 20px 20px; }
.p2{ grid-template-columns: 20px 22px 22px 20px 14px 20px 6px; }
.p3{ grid-template-columns: 18px 9px 22px 5px 14px 10px 8px 12px 16px; }
.vs{
  width: 1px;
  height: 12px;
  background: #ddd;
}
.ser{
  font-family: "Liberation Serif", serif;
  font-size: 16px;
  line-height: 18px;
  color: #222;
}
.bd{ font-weight: bold; font-size: 17px; }
.it{ font-style: italic; }
.un{ text-decoration: underline; }
.st{ font-size: 10.500px; font-weight: bold; text-decoration: line-through; }
.xx{
  font: bold 13px/16px "Liberation Sans", sans-serif;
}
.xx sub, .xx sup{
  font-size: 7px;
  line-height: 0;
  color: #345b9c;
}
.clear{
  font-size: 7px;
  width: 16px;
  display: flex;
  align-items: flex-start;
}
.clear svg{
  margin-left: -9px;
}
.glow{
  color: #fff;
  font-size: 18px;
  -webkit-text-stroke: 1px #5f9bd0;
}
.redu{
  line-height: 12px;
  border-bottom: 4px solid #f00;
  padding: 0 3px;
  font-size: 14px;
}
.aa, .grow{ font-weight: bold; font-size: 13px; }
.grow{ font-size: 16px; }
.shrink{ font-weight: bold; font-size: 12px; }
.grow sup, .shrink sup{ font-size: 7px; line-height: 0; color: #345b9c; }
.para{
  width: 140px;
  padding-left: 5px;
}
.pressed{
  width: 20px;
  height: 20px;
  border: 1px solid #c29a35;
  background: #fbd65e;
  display: flex;
  align-items: center;
  justify-content: center;
}
.az em{
  display: block;
  font: bold 8px/8px "Liberation Sans", sans-serif;
  color: #3b56a0;
}
.az em + em{ color: #a0353b; }
.pil{ font-size: 15px; }
.styles{
  width: 40px;
  border: 0;
  align-items: center;
  font-size: 10.500px;
  padding-top: 4px;
  padding-left: 2px;
  gap: 5px;
}
.sbox{
  width: 29px;
  height: 28px;
  border: 1px solid #ddd;
  background: #fff;
  text-align: center;
  font: italic bold 18px/28px "Liberation Serif", serif;
  color: #2f4e8c;
}
.ruler{
  background: linear-gradient(#dfe3e8, #b4b9c1);
}
.rn{
  font: 10px "Open Sans", sans-serif;
  text-anchor: middle;
  fill: #444;
}
.docarea{
  height: 483px;
  flex: none;
  overflow: hidden;
  padding-left: 42px;
  background: #a4a6ad;
}
.page{
  height: 500px;
  background: #fff;
  border: 1px solid #8c8e95;
  border-right: 0;
  padding: 49px 0 0 48.500px;
  font-family: Lato, sans-serif;
  font-size: 7px;
  color: #111;
}
.page p{
  margin: 0;
  height: 9.090px;
  line-height: 9.090px;
  white-space: nowrap;
}
.page .head{
  height: 19.500px;
  line-height: 11px;
  font-size: 7.500px;
}
.page .l1{ margin-left: 25px; }
.page .l2{ margin-left: 49px; }
.page .l3{ margin-left: 73.500px; }
.page .tight{ letter-spacing: -.1px; }
.page .wide{ word-spacing: .4px; }
.page u{
  text-decoration: underline #4aa05a;
}
.page s{
  display: inline-block;
  text-decoration: none;
  font: bold 7.500px/7px "DejaVu Sans", sans-serif;
}
.wstatus{
  height: 23px;
  flex: none;
  margin-left: 6px;
  padding-bottom: 2px;
  display: flex;
  align-items: center;
  background: linear-gradient(#e3e5e8, #bfc2c8 60%, #b5b9bf);
  border-top: 1px solid #888;
  font-size: 11px;
  color: #444;
}
.msg{
  width: 196px;
  display: flex;
  justify-content: flex-end;
  white-space: nowrap;
  letter-spacing: -.42px;
}
.grip2{
  width: 4px;
  height: 15px;
  margin: 0 5px 0 7px;
  border: 1px solid #aaa;
  border-width: 0 1px;
}
.vbtn{
  width: 18px;
  height: 20px;
  border: 1px solid #c29a35;
  background: #fbdf80;
  display: flex;
  align-items: center;
  justify-content: center;
}
.vbtn svg{
  width: 11px;
  height: 11px;
  border: 1px solid #777;
  background: #fff;
}
.vbtn ~ svg{
  margin-left: 5px;
}
.pct{
  width: 23px;
  margin: 0 4px 0 8px;
  letter-spacing: -.3px;
}
.minus{
  width: 14px;
  height: 14px;
  border: 1px solid #777;
  border-radius: 50%;
  background: #eee;
  display: flex;
  align-items: center;
  justify-content: center;
}
.minus::before{
  content: "";
  width: 7px;
  height: 2px;
  background: #555;
}
.track{
  flex: 1;
  height: 1px;
  background: #888;
  margin-left: 5px;
  display: flex;
  align-items: center;
  padding-left: 18px;
}
.thumb{
  width: 8px;
  height: 12px;
  border: 1px solid #666;
  border-radius: 1px 1px 4px 4px;
  background: #f4f4f4;
}
```
